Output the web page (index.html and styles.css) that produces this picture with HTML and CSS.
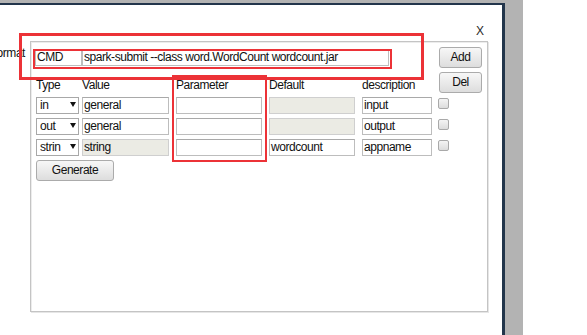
FILE: index.html
```html
<!DOCTYPE html>
<html>
<head>
<meta charset="utf-8">
<link rel="stylesheet" href="styles.css">
</head>
<body>
<div class="screen">
  <div class="backdrop">
    <div class="dialog">
      <div class="dlg-head"><span class="close">X</span></div>
      <div class="dlg-body">
        <div class="label-col"><span class="label">Format</span></div>
        <div class="fieldset">
          <div class="grid">
            <div class="inp cmd">CMD</div>
            <div class="inp spark">spark-submit --class word.WordCount wordcount.jar</div>
            <div class="btn add">Add</div>

            <div class="th">Type</div>
            <div class="th">Value</div>
            <div class="th">Parameter</div>
            <div class="th">Default</div>
            <div class="th">description</div>
            <div class="btn del">Del</div>

            <div class="sel"><span class="sel-txt">in</span><span class="arrow"></span></div>
            <div class="inp w87">general</div>
            <div class="inp w86"></div>
            <div class="inp w86 dis"></div>
            <div class="inp w70">input</div>
            <div class="chk"></div>

            <div class="sel"><span class="sel-txt">out</span><span class="arrow"></span></div>
            <div class="inp w87">general</div>
            <div class="inp w86"></div>
            <div class="inp w86 dis"></div>
            <div class="inp w70">output</div>
            <div class="chk"></div>

            <div class="sel"><span class="sel-txt">strin</span><span class="arrow"></span></div>
            <div class="inp w87 dis">string</div>
            <div class="inp w86"></div>
            <div class="inp w86">wordcount</div>
            <div class="inp w70">appname</div>
            <div class="chk"></div>

            <div class="btn gen">Generate</div>
          </div>
        </div>
      </div>
    </div>
  </div>
  <div class="mark mark-big"></div>
  <div class="mark mark-cmd"></div>
  <div class="mark mark-param"></div>
</div>
</body>
</html>
```

FILE: styles.css
```css
html, body {
  margin: 0;
  padding: 0;
  background: #ffffff;
  overflow: hidden;
}
body {
  font-family: "Liberation Sans", Arial, sans-serif;
  font-size: 12px;
  letter-spacing: -0.45px;
  color: #111;
}
.screen {
  position: relative;
  width: 587px;
  height: 335px;
  display: flex;
}
.backdrop {
  width: 523px;
  height: 335px;
  background: #b3b3b3;
  padding-top: 3px;
  box-sizing: border-box;
}
.dialog {
  width: 505px;
  height: 332px;
  background: #fff;
  border-top: 2px solid #22354b;
  border-right: 3px solid #22354b;
  box-sizing: border-box;
}
.dlg-head {
  height: 36px;
  box-sizing: border-box;
  padding: 19px 18px 0 0;
  display: flex;
  justify-content: flex-end;
}
.close {
  font-size: 12px;
  line-height: 14px;
  letter-spacing: 0;
  color: #2a2a2a;
}
.dlg-body {
  display: grid;
  grid-template-columns: 25px 458px;
  column-gap: 5px;
}
.label-col {
  display: flex;
  justify-content: flex-end;
  padding-top: 5px;
  white-space: nowrap;
  line-height: 15px;
}
.fieldset {
  height: 271px;
  border: 1px solid #c4c4c4;
  box-shadow: inset 1px 1px 0 #ececec, 1px 1px 0 #e6e6e6;
  padding: 5px;
  box-sizing: border-box;
}
.grid {
  display: grid;
  grid-template-columns: 46px 94px 93px 93px 76px 44px;
  grid-template-rows: 21px 21px 17px 17px 17px 21px;
  row-gap: 4px;
  line-height: 15px;
}
.inp {
  height: 17px;
  box-sizing: border-box;
  border: 1px solid #bdbdbd;
  border-top-color: #a9a9a9;
  padding: 0 1px;
  background: #fff;
  white-space: nowrap;
  overflow: hidden;
  align-self: center;
}
.dis {
  background: #ebebe4;
  border-color: #cfcfcf;
}
.cmd {
  width: 47px;
  margin-left: -1px;
}
.spark {
  grid-column: 2 / 6;
  width: 307px;
}
.w87 { width: 87px; }
.w86 { width: 86px; }
.w70 { width: 70px; }
.th {
  align-self: end;
}
.btn {
  box-sizing: border-box;
  border: 1px solid #ababab;
  border-radius: 3px;
  background: linear-gradient(#f7f7f7, #dddddd);
  display: flex;
  align-items: center;
  justify-content: center;
  color: #111;
}
.add, .del {
  width: 43px;
  height: 21px;
  justify-self: end;
}
.gen {
  grid-column: 1 / 3;
  width: 78px;
  height: 21px;
}
.sel {
  width: 43px;
  height: 17px;
  box-sizing: border-box;
  border: 1px solid #a8a8a8;
  background: #fff;
  display: flex;
  align-items: center;
  padding-left: 3px;
}
.sel-txt {
  width: 28px;
  overflow: hidden;
  white-space: nowrap;
}
.arrow {
  width: 0;
  height: 0;
  margin-left: 2px;
  border-left: 3px solid transparent;
  border-right: 3px solid transparent;
  border-top: 5px solid #111;
  margin-top: -2px;
}
.chk {
  width: 11px;
  height: 11px;
  box-sizing: border-box;
  border: 1px solid #a9a9a9;
  border-radius: 2px;
  background: linear-gradient(#f4f4f4, #dcdcdc);
  margin-top: 1px;
}
.mark {
  position: absolute;
  box-sizing: border-box;
  pointer-events: none;
}
.mark-big {
  left: 19px;
  top: 33px;
  width: 405px;
  height: 47px;
  border: 3px solid #ec3237;
}
.mark-cmd {
  left: 33px;
  top: 49px;
  width: 359px;
  height: 20px;
  border: 2px solid #ec3237;
}
.mark-param {
  left: 172px;
  top: 75px;
  width: 95px;
  height: 87px;
  border: 2px solid #ec3237;
}
```
